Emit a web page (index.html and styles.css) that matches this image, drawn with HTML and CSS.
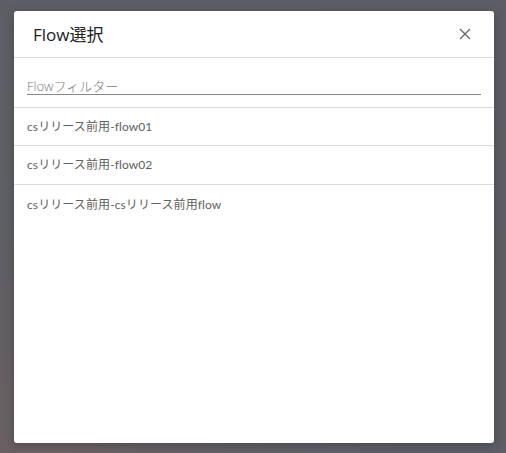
FILE: index.html
```html
<!DOCTYPE html>
<html lang="ja">
<head>
<meta charset="utf-8">
<link rel="stylesheet" href="styles.css">
</head>
<body>
<div class="backdrop">
  <div class="modal">
    <div class="modal-header">
      <h1 class="modal-title">Flow選択</h1>
      <button class="close-btn" aria-label="close">
        <svg width="12" height="12" viewBox="0 0 12 12"><path d="M1 1L11 11M11 1L1 11" stroke="#666" stroke-width="1.3" fill="none"/></svg>
      </button>
    </div>
    <div class="filter">
      <input class="filter-input" type="text" placeholder="Flowフィルター">
    </div>
    <ul class="flow-list">
      <li class="flow-item">csリリース前用-flow01</li>
      <li class="flow-item">csリリース前用-flow02</li>
      <li class="flow-item last">csリリース前用-csリリース前用flow</li>
    </ul>
  </div>
</div>
</body>
</html>
```
FILE: styles.css
```css
html, body {
  margin: 0;
  padding: 0;
  height: 100%;
}
body {
  background: radial-gradient(circle at 10% 100%, #6a6062 0%, #5f5f66 35%, #5c5d65 100%);
  font-family: "Open Sans", "Noto Sans CJK JP", sans-serif;
  overflow: hidden;
}
.backdrop {
  padding: 11px 12px 0 14px;
}
.modal {
  width: 480px;
  height: 432px;
  background: #fff;
  border-radius: 3px;
  box-shadow: 0 2px 10px rgba(0,0,0,0.25);
  display: flex;
  flex-direction: column;
}
.modal-header {
  height: 46px;
  border-bottom: 1px solid #dcdcdc;
  display: flex;
  align-items: center;
  justify-content: space-between;
  padding: 0 23px 0 19px;
}
.modal-title {
  margin: 0;
  font-size: 17px;
  font-weight: 400;
  color: #222;
  position: relative;
  top: -1px;
}
.close-btn {
  border: 0;
  background: none;
  padding: 0;
  width: 12px;
  height: 12px;
  display: flex;
}
.filter {
  height: 49px;
  border-bottom: 1px solid #dcdcdc;
  padding: 0 13px;
  display: flex;
  align-items: flex-start;
}
.filter-input {
  margin-top: 20px;
  width: 100%;
  box-sizing: border-box;
  border: 0;
  border-bottom: 1px solid #888;
  outline: none;
  font-family: "Open Sans", "Noto Sans CJK JP", sans-serif;
  font-size: 13px;
  font-weight: 300;
  padding: 0;
  height: 17px;
  line-height: 16px;
}
.filter-input::placeholder {
  color: #7a7a7a;
}
.flow-list {
  list-style: none;
  margin: 0;
  padding: 0;
}
.flow-item {
  height: 38px;
  box-sizing: border-box;
  padding: 0 13px 3px;
  border-bottom: 1px solid #dcdcdc;
  display: flex;
  align-items: center;
  font-family: "Lato", "Noto Sans CJK JP", sans-serif;
  font-size: 12px;
  letter-spacing: 0.1px;
  color: #606060;
}
.flow-item:first-child {
  height: 38px;
}
.flow-item + .flow-item {
  height: 39px;
}
.flow-item.last {
  border-bottom: 0;
}
```
